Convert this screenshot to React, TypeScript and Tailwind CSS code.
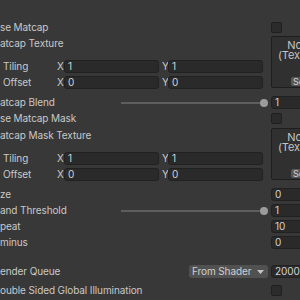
const font = { fontFamily: "Inter, 'Noto Sans', sans-serif" };

function Field({ value, w = "w-[62px]" }: { value: string; w?: string }) {
  return (
    <div
      className={`${w} h-[13px] shrink-0 rounded-[3px] border border-[#212121] bg-[#2a2a2a] pl-[3px] text-[10px] leading-[11px] text-[#d2d2d2]`}
    >
      {value}
    </div>
  );
}

function Checkbox() {
  return <div className="h-[11px] w-[11px] shrink-0 rounded-[2px] border border-[#1f1f1f] bg-[#2b2b2b]" />;
}

function Slider() {
  return (
    <div className="relative ml-auto mr-[3px] flex h-[10px] w-[147px] items-center">
      <div className="h-[2px] w-[142px] bg-[#5e5e5e]" />
      <div className="absolute right-0 top-[1px] h-[8px] w-[8px] rounded-full bg-[#9c9c9c]" />
    </div>
  );
}

function Row({ label, children, mt, h = "h-[13px]", right }: { label: string; children?: React.ReactNode; mt: string; h?: string; right?: React.ReactNode }) {
  return (
    <div className={`flex ${h} ${mt} items-center`}>
      <div className="flex w-[271px] items-center">
        <span className="whitespace-nowrap">{label}</span>
        {children}
      </div>
      {right}
    </div>
  );
}

function VecRow({ label, x, y, mt }: { label: string; x: string; y: string; mt: string }) {
  return (
    <div className={`flex h-[13px] ${mt} items-center`}>
      <span className="w-[57px] shrink-0 pl-[3px]">{label}</span>
      <span className="w-[7px] shrink-0">X</span>
      <Field value={x} w="w-[95px]" />
      <span className="ml-[3px] w-[6px] shrink-0">Y</span>
      <Field value={y} w="w-[95px]" />
    </div>
  );
}

function TextureBlock({ label, mt }: { label: string; mt: string }) {
  return (
    <div className={`flex ${mt}`}>
      <div className="w-[268px]">
        <div className="flex h-[15px] items-center whitespace-nowrap">{label}</div>
        <VecRow label="Tiling" x="1" y="1" mt="mt-[9px]" />
        <VecRow label="Offset" x="0" y="0" mt="mt-[3px]" />
      </div>
      <div className="relative ml-[3px] h-[52px] w-[60px] shrink-0 whitespace-nowrap rounded-[2px] border border-[#1e1e1e] bg-[#303030] text-center text-[11px] leading-[10px] text-[#c4c4c4]">
        <div className="pt-[3px]">None</div>
        <div>(Texture)</div>
        <div className="absolute bottom-[1px] right-[1px] h-[9px] w-[38px] rounded-[2px] bg-[#585858] pl-[2px] text-left text-[9px] leading-[9px] text-[#d0d0d0]">
          Select
        </div>
      </div>
    </div>
  );
}

export default function App() {
  return (
    <div
      className="h-[300px] w-[300px] overflow-hidden bg-[#383838] text-[10px] tracking-[-0.1px] text-[#c8c8c8]"
      style={font}
    >
      <div className="w-[340px] pt-[19px]">
        <Row label="se Matcap" h="h-[16px]" mt="mt-0" right={<Checkbox />} />
        <TextureBlock label="atcap Texture" mt="mt-[1px]" />
        <Row label="atcap Blend" mt="mt-[7px]" right={<Field value="1" />}>
          <Slider />
        </Row>
        <Row label="se Matcap Mask" h="h-[12px]" mt="mt-[3px]" right={<Checkbox />} />
        <TextureBlock label="atcap Mask Texture" mt="mt-[4px]" />
        <Row label="ze" mt="mt-[7px]" right={<Field value="0" />} />
        <Row label="and Threshold" mt="mt-[3px]" right={<Field value="1" />}>
          <Slider />
        </Row>
        <Row label="peat" mt="mt-[3px]" right={<Field value="10" />} />
        <Row label="minus" mt="mt-[3px]" right={<Field value="0" />} />
        <Row label="ender Queue" mt="mt-[16px]" right={<Field value="2000" />}>
          <div className="ml-auto mr-[3px] flex h-[13px] w-[79px] items-center justify-between whitespace-nowrap rounded-[3px] bg-[#515151] pl-[3px] pr-[4px] text-[#d0d0d0]">
            <span>From Shader</span>
            <svg width="7" height="4" viewBox="0 0 7 4">
              <path d="M0 0h7L3.5 4z" fill="#c4c4c4" />
            </svg>
          </div>
        </Row>
        <Row label="ouble Sided Global Illumination" mt="mt-[6px]" right={<Checkbox />} />
      </div>
    </div>
  );
}
